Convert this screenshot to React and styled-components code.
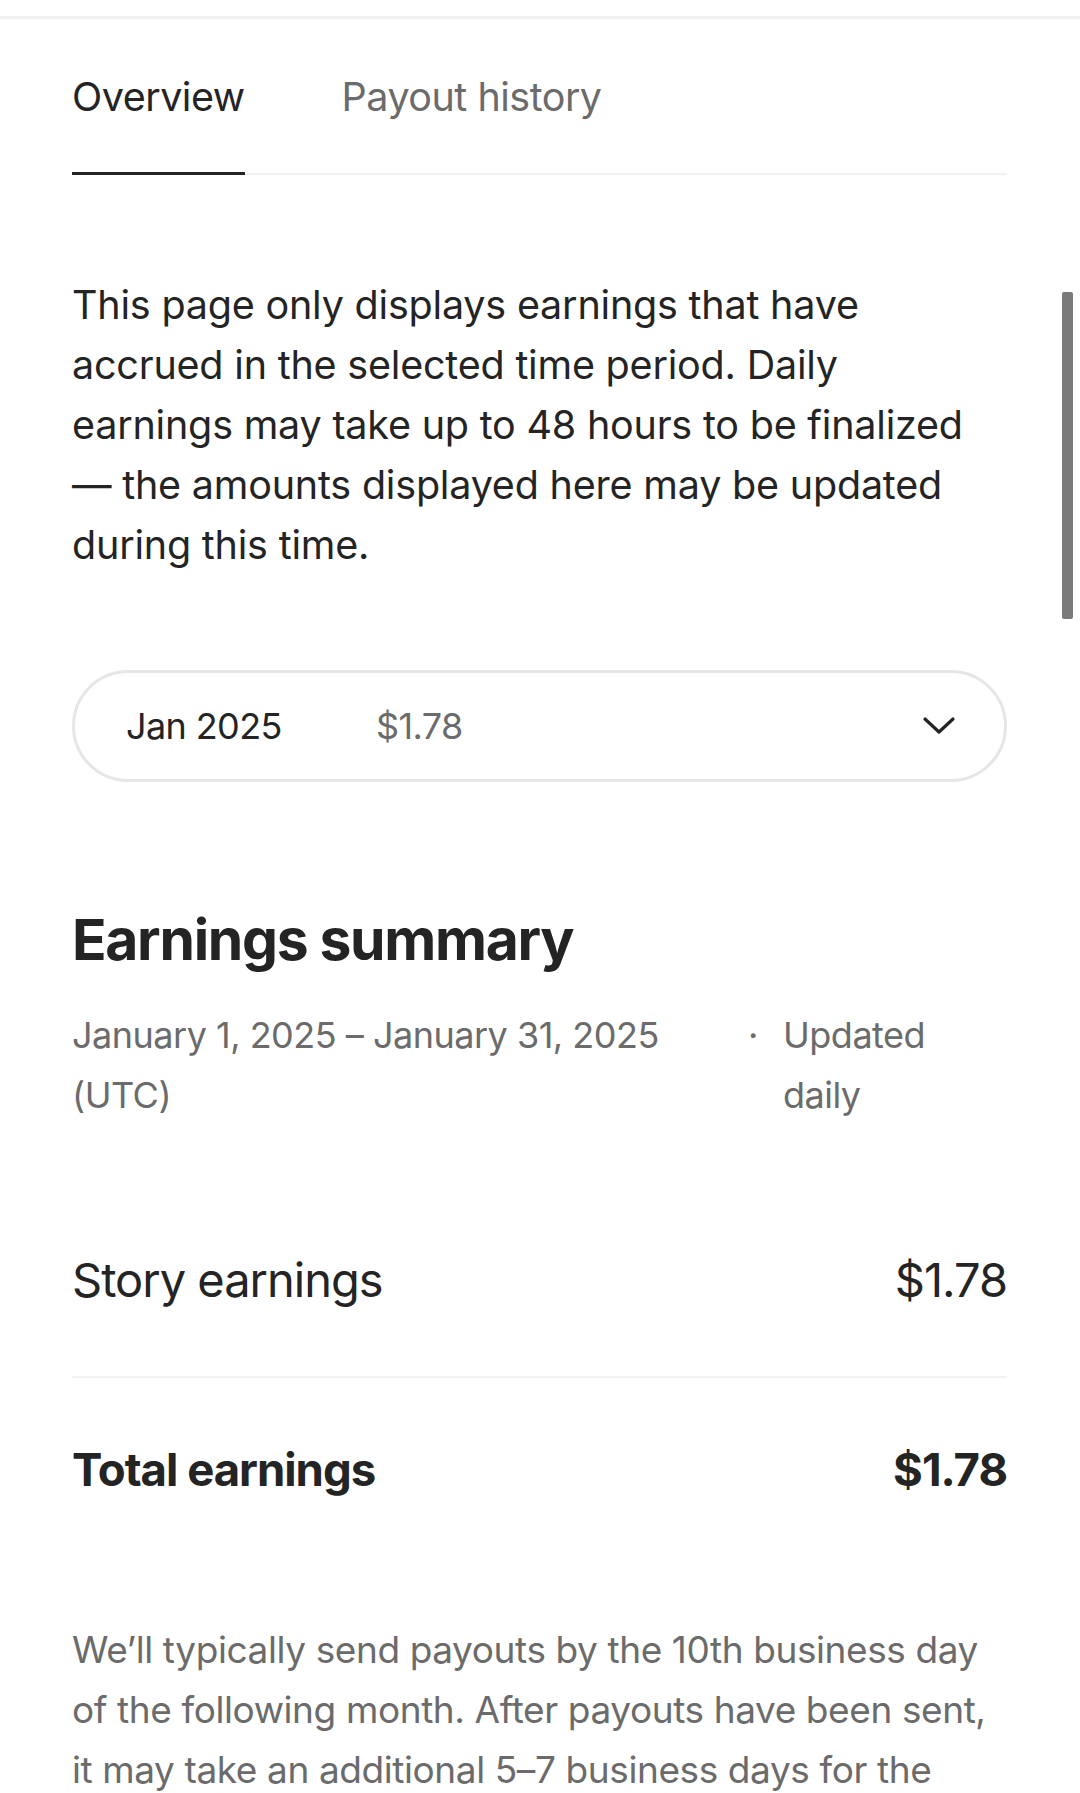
import React from 'react';
import styled, { createGlobalStyle } from 'styled-components';

const GlobalStyle = createGlobalStyle`
  html, body {
    margin: 0;
    padding: 0;
    background: #fff;
  }
  body {
    font-family: Inter, "Noto Sans", sans-serif;
    color: #242424;
    -webkit-font-smoothing: antialiased;
  }
`;

const Page = styled.div`
  position: relative;
  width: 1080px;
  min-height: 1793px;
  overflow: hidden;
`;

const TopBar = styled.div`
  height: 16px;
  border-bottom: 3px solid #f1f1f1;
`;

const Main = styled.main`
  padding: 0 73px 0 72px;
`;

const Tabs = styled.nav`
  display: flex;
  gap: 97px;
  margin-top: 50px;
  border-bottom: 2px solid #f2f2f2;
`;

const Tab = styled.div`
  font-size: 39.5px;
  letter-spacing: -0.5px;
  line-height: 56px;
  padding-bottom: 47px;
  margin-bottom: -2px;
  color: ${p => (p.$active ? '#242424' : '#6b6b6b')};
  border-bottom: 3px solid ${p => (p.$active ? '#242424' : 'transparent')};
`;

const Intro = styled.p`
  margin: 100px 0 0;
  font-size: 39.5px;
  letter-spacing: -0.2px;
  line-height: 60px;
  color: #242424;
`;

const Picker = styled.button`
  display: flex;
  align-items: center;
  width: 100%;
  height: 112px;
  margin-top: 95px;
  padding: 0 48px 0 51px;
  box-sizing: border-box;
  border: 3px solid #e6e6e6;
  border-radius: 56px;
  background: #fff;
  font-family: inherit;
  font-size: 36px;
  letter-spacing: -0.6px;
  color: #242424;
`;

const Month = styled.span`
  width: 250px;
  text-align: left;
`;

const Amount = styled.span`
  flex: 1;
  text-align: left;
  color: #6b6b6b;
`;

const Heading = styled.h2`
  margin: 122px 0 0;
  font-size: 57px;
  font-weight: 700;
  letter-spacing: -1.3px;
  line-height: 72px;
`;

const Meta = styled.div`
  display: flex;
  margin-top: 29px;
  font-size: 36px;
  letter-spacing: -0.5px;
  line-height: 60px;
  color: #6b6b6b;
`;

const MetaRange = styled.div`
  flex: 0 0 676px;
`;

const MetaDot = styled.span`
  flex: 0 0 35px;
`;

const MetaNote = styled.div`
  flex: 1;
`;

const Rows = styled.div`
  margin-top: 123px;
`;

const Row = styled.div`
  display: flex;
  justify-content: space-between;
  align-items: center;
  padding: ${p => (p.$total ? '60px 0' : '0 0 64px')};
  border-bottom: ${p => (p.$total ? 'none' : '2px solid #f2f2f2')};
  font-size: ${p => (p.$total ? '45.5px' : '47px')};
  font-weight: ${p => (p.$total ? 700 : 400)};
  letter-spacing: -1px;
  line-height: 64px;
`;

const Footnote = styled.p`
  margin: 58px 0 0;
  font-size: 37px;
  letter-spacing: -0.4px;
  line-height: 60px;
  color: #6b6b6b;
`;

const ScrollThumb = styled.div`
  position: absolute;
  top: 292px;
  right: 7px;
  width: 11px;
  height: 327px;
  border-radius: 2px;
  background: #7a7a7a;
`;

const BottomFade = styled.div`
  position: absolute;
  left: 0;
  right: 0;
  bottom: 0;
  height: 10px;
  background: linear-gradient(to bottom, rgba(0, 0, 0, 0), rgba(0, 0, 0, 0.05));
`;

const Chevron = () => (
  <svg width="34" height="20" viewBox="0 0 34 20" fill="none">
    <path d="M3 3l14 13L31 3" stroke="#242424" strokeWidth="3.2" strokeLinecap="round" strokeLinejoin="round" />
  </svg>
);

export default function App() {
  return (
    <Page>
      <GlobalStyle />
      <TopBar />
      <Main>
        <Tabs>
          <Tab $active>Overview</Tab>
          <Tab>Payout history</Tab>
        </Tabs>

        <Intro>
          This page only displays earnings that have accrued in the selected time period. Daily
          earnings may take up to 48 hours to be finalized — the amounts displayed here may be
          updated during this time.
        </Intro>

        <Picker>
          <Month>Jan 2025</Month>
          <Amount>$1.78</Amount>
          <Chevron />
        </Picker>

        <Heading>Earnings summary</Heading>
        <Meta>
          <MetaRange>January 1, 2025 – January 31, 2025 (UTC)</MetaRange>
          <MetaDot>·</MetaDot>
          <MetaNote>Updated daily</MetaNote>
        </Meta>

        <Rows>
          <Row>
            <span>Story earnings</span>
            <span>$1.78</span>
          </Row>
          <Row $total>
            <span>Total earnings</span>
            <span>$1.78</span>
          </Row>
        </Rows>

        <Footnote>
          We’ll typically send payouts by the 10th business day of the following month. After
          payouts have been sent, it may take an additional 5–7 business days for the funds to
          arrive in your account.
        </Footnote>
      </Main>
      <ScrollThumb />
      <BottomFade />
    </Page>
  );
}
